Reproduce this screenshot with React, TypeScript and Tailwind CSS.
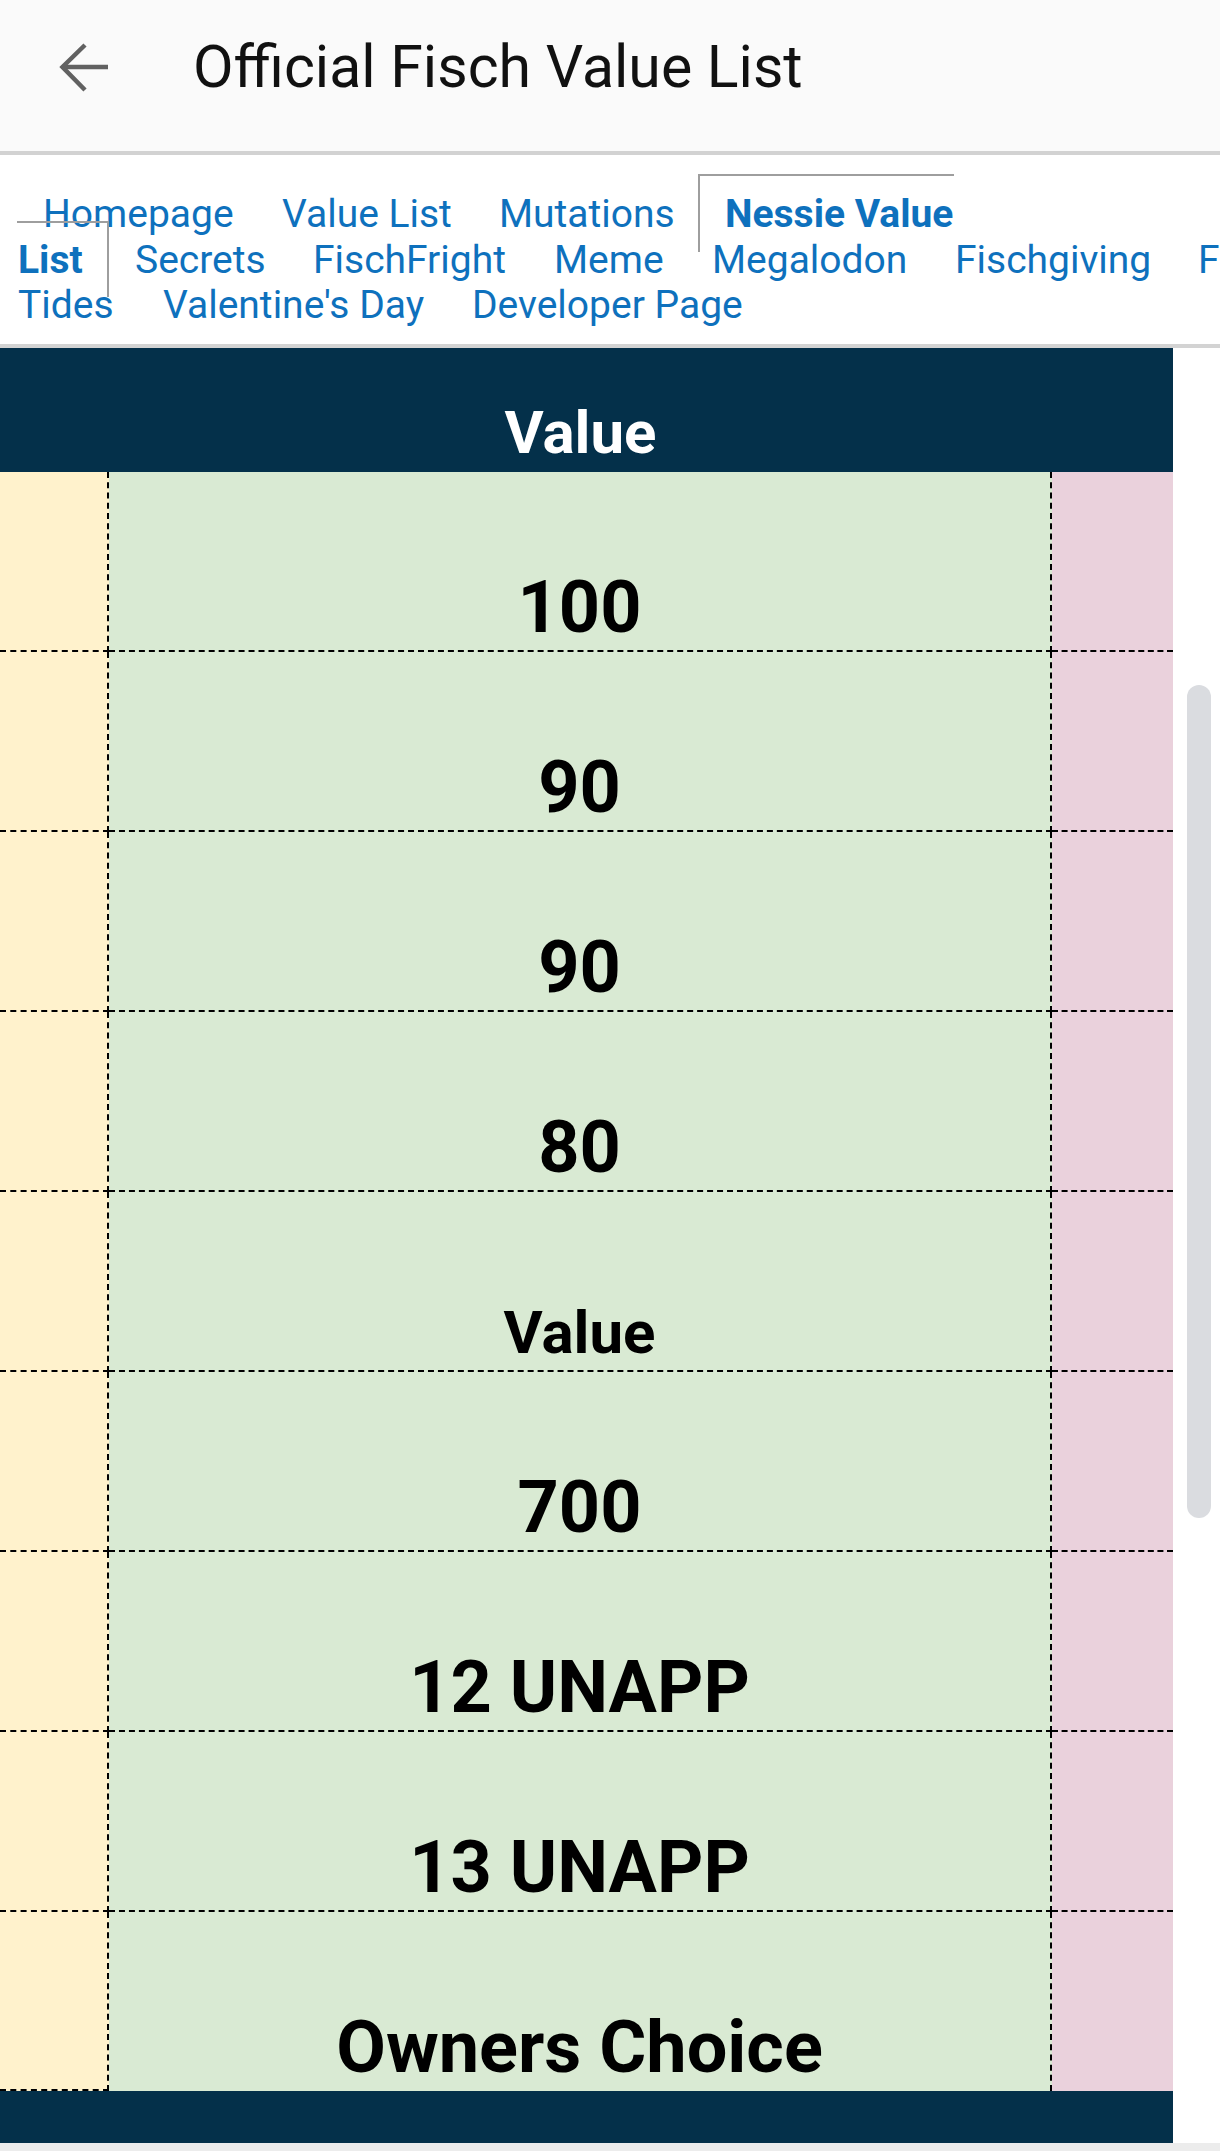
const rowOne = [
  { label: "Homepage", w: "w-[239px]" },
  { label: "Value List", w: "w-[217px]" },
  { label: "Mutations", w: "w-[226px]" },
];

const rowTwo = [
  { label: "Secrets", w: "w-[178px]" },
  { label: "FischFright", w: "w-[241px]" },
  { label: "Meme", w: "w-[158px]" },
  { label: "Megalodon", w: "w-[243px]" },
  { label: "Fischgiving", w: "w-[243px]" },
  { label: "Fischmas", w: "" },
];

const rowThree = [
  { label: "Tides", w: "w-[145px]" },
  { label: "Valentine's Day", w: "w-[309px]" },
  { label: "Developer Page", w: "" },
];

const values = [
  { text: "100", small: false },
  { text: "90", small: false },
  { text: "90", small: false },
  { text: "80", small: false },
  { text: "Value", small: true },
  { text: "700", small: false },
  { text: "12 UNAPP", small: false },
  { text: "13 UNAPP", small: false },
  { text: "Owners Choice", small: false, last: true },
];

const NavLink = ({ label, w }: { label: string; w: string }) => (
  <span className={`shrink-0 whitespace-nowrap ${w}`}>{label}</span>
);

const Header = () => (
  <div className="flex items-start h-[151px] bg-[#fafafa] border-b-4 border-[#d2d2d2] box-content">
    <svg
      className="ml-[56px] mt-[39px] shrink-0"
      width="56"
      height="56"
      viewBox="0 0 56 56"
      fill="none"
      stroke="#616161"
      strokeWidth="4.5"
      strokeLinecap="butt"
      strokeLinejoin="miter"
    >
      <path d="M6 28H52" />
      <path d="M29 6L6.5 28L29 51" />
    </svg>
    <h1 className="ml-[81px] mt-[37px] text-[59px] leading-[60px] font-normal text-[#111] whitespace-nowrap">
      Official Fisch Value List
    </h1>
  </div>
);

const Nav = () => (
  <div className="relative overflow-hidden bg-white pt-[37px] pb-[15px] border-b-4 border-[#d3d3d3] text-[39px] leading-[45.5px] text-[#0e71bd]">
    <div className="flex h-[45.5px] pl-[43px]">
      {rowOne.map((l) => (
        <NavLink key={l.label} {...l} />
      ))}
      <span className="shrink-0 whitespace-nowrap font-bold">Nessie Value</span>
    </div>
    <div className="flex h-[45.5px] pl-[18px]">
      <span className="shrink-0 whitespace-nowrap font-bold w-[117px]">List</span>
      {rowTwo.map((l) => (
        <NavLink key={l.label} {...l} />
      ))}
    </div>
    <div className="flex h-[45.5px] pl-[18px]">
      {rowThree.map((l) => (
        <NavLink key={l.label} {...l} />
      ))}
    </div>

    {/* selected page bracket, wraps over two lines */}
    <div className="absolute left-[698px] top-[19px] w-[256px] h-[78px] border-t-2 border-l-2 border-[#9e9e9e]" />
    <div className="absolute left-[17px] top-[66px] w-[92px] h-[76px] border-t-2 border-r-2 border-[#9e9e9e]" />
  </div>
);

const Table = () => (
  <div className="relative">
    <div className="w-[1173px]">
      <div className="grid grid-cols-[109px_943px_121px] h-[124px] bg-[#04304a]">
        <div />
        <div className="flex items-end justify-center pb-[9px] text-[60px] leading-[60px] font-bold text-white">
          Value
        </div>
        <div />
      </div>

      {values.map((v, i) =>
        v.last ? (
          <div key={i} className="grid grid-cols-[109px_943px_121px] h-[175px]">
            <div className="relative z-10 h-[179px] bg-[#fff2cc] border-r-2 border-b-2 border-dashed border-black" />
            <div className="flex items-end justify-center pb-[7px] bg-[#d9ead3] border-r-2 border-dashed border-black text-[72px] leading-[72px] font-bold text-black whitespace-nowrap">
              {v.text}
            </div>
            <div className="bg-[#ead1dc]" />
          </div>
        ) : (
          <div key={i} className="grid grid-cols-[109px_943px_121px] h-[180px]">
            <div className="bg-[#fff2cc] border-r-2 border-b-2 border-dashed border-black" />
            <div
              className={`flex items-end justify-center bg-[#d9ead3] border-r-2 border-b-2 border-dashed border-black font-bold text-black whitespace-nowrap ${
                v.small ? "pb-[7px] text-[60px] leading-[60px]" : "pb-[6px] text-[72px] leading-[72px]"
              }`}
            >
              {v.text}
            </div>
            <div className="bg-[#ead1dc] border-b-2 border-dashed border-black" />
          </div>
        )
      )}

      <div className="h-[56px] bg-[#04304a]" />
    </div>

    {/* page scrollbar */}
    <div className="absolute left-[1187px] top-[337px] w-[24px] h-[833px] rounded-full bg-[#dadce0]" />
  </div>
);

export default function App() {
  return (
    <div className="w-[1220px] h-[2151px] overflow-hidden bg-white font-['Roboto',sans-serif]">
      <Header />
      <Nav />
      <Table />
      <div className="h-[9px] bg-[#ececec]" />
    </div>
  );
}
